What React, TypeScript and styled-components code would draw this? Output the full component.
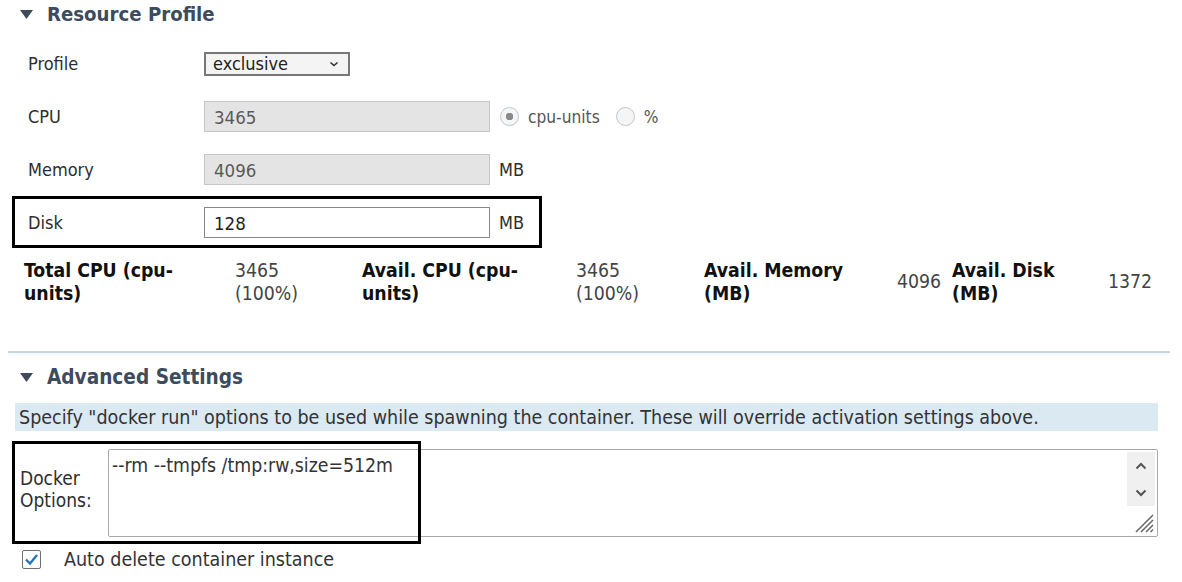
import styled, { createGlobalStyle } from 'styled-components'

const GlobalStyle = createGlobalStyle`
  html, body {
    margin: 0;
    padding: 0;
    background: #fff;
  }
  body {
    font-family: 'DejaVu Sans Condensed', 'DejaVu Sans', sans-serif;
    font-size: 18px;
    color: #2e2e2e;
  }
`

type Stat = { label: string; value: string }

const stats: Stat[] = [
  { label: 'Total CPU (cpu-units)', value: '3465 (100%)' },
  { label: 'Avail. CPU (cpu-units)', value: '3465 (100%)' },
  { label: 'Avail. Memory (MB)', value: '4096' },
  { label: 'Avail. Disk (MB)', value: '1372' },
]

function Caret() {
  return (
    <svg width="13" height="9" viewBox="0 0 13 9">
      <path d="M0 0 L13 0 L6.5 9 Z" fill="#3d4b5c" />
    </svg>
  )
}

function App() {
  return (
    <Page>
      <GlobalStyle />
      <SectionHeader>
        <Caret />
        <span>Resource Profile</span>
      </SectionHeader>

      <Form>
        <FormRow>
          <Label>Profile</Label>
          <Select>
            <span>exclusive</span>
            <svg width="12" height="8" viewBox="0 0 12 8">
              <path d="M2.5 2.5 L6 5.5 L9.5 2.5" fill="none" stroke="#333" strokeWidth="1.6" />
            </svg>
          </Select>
        </FormRow>
        <FormRow>
          <Label>CPU</Label>
          <Input disabled>3465</Input>
          <RadioGroup>
            <Radio checked />
            <RadioText>cpu-units</RadioText>
            <Radio />
            <RadioText>%</RadioText>
          </RadioGroup>
        </FormRow>
        <FormRow>
          <Label>Memory</Label>
          <Input disabled>4096</Input>
          <Unit>MB</Unit>
        </FormRow>
        <HighlightRow>
          <Label>Disk</Label>
          <Input>128</Input>
          <Unit>MB</Unit>
        </HighlightRow>
      </Form>

      <StatsGrid>
        {stats.map((s) => (
          <StatPair key={s.label}>
            <StatLabel>{s.label}</StatLabel>
            <StatValue>{s.value}</StatValue>
          </StatPair>
        ))}
      </StatsGrid>

      <Divider />

      <SectionHeader wide>
        <Caret />
        <span>Advanced Settings</span>
      </SectionHeader>

      <InfoBar>
        Specify "docker run" options to be used while spawning the container. These will override activation settings above.
      </InfoBar>

      <DockerRow>
        <DockerLabel>
          Docker
          <br />
          Options:
        </DockerLabel>
        <TextArea>
          <span>--rm --tmpfs /tmp:rw,size=512m</span>
          <ScrollColumn>
            <svg width="14" height="10" viewBox="0 0 14 10">
              <path d="M2.5 7.5 L7 3 L11.5 7.5" fill="none" stroke="#555" strokeWidth="2" />
            </svg>
            <svg width="14" height="10" viewBox="0 0 14 10">
              <path d="M2.5 2.5 L7 7 L11.5 2.5" fill="none" stroke="#555" strokeWidth="2" />
            </svg>
          </ScrollColumn>
          <Grip width="24" height="24" viewBox="0 0 24 24">
            <path d="M22 5 L5 22 M22 10 L10 22 M22 15 L15 22 M22 19.5 L19.5 22" stroke="#666" strokeWidth="1.5" />
          </Grip>
        </TextArea>
        <Annotation />
      </DockerRow>

      <CheckRow>
        <Checkbox>
          <svg width="15" height="13" viewBox="0 0 15 13">
            <path d="M2 6.5 L6 10.5 L13 2" fill="none" stroke="#1d6fc1" strokeWidth="2.2" />
          </svg>
        </Checkbox>
        <span>Auto delete container instance</span>
      </CheckRow>
    </Page>
  )
}

export default App

const Page = styled.div`
  width: 1182px;
  height: 582px;
  overflow: hidden;
`

const SectionHeader = styled.div<{ wide?: boolean }>`
  height: 28px;
  display: flex;
  align-items: center;
  padding-left: 20px;
  gap: 14px;
  font-size: ${({ wide }) => (wide ? '20.6px' : '20.2px')};
  font-weight: bold;
  color: #3d4b5c;
`

const Form = styled.div`
  padding-top: 9px;
`

const FormRow = styled.div`
  height: 53px;
  display: flex;
  align-items: center;
  padding-left: 28px;
`

const HighlightRow = styled(FormRow)`
  box-sizing: border-box;
  width: 530px;
  height: 52px;
  margin-left: 12px;
  padding-left: 13px;
  border: 3px solid #000;
`

const Label = styled.div`
  width: 176px;
`

const Select = styled.div`
  box-sizing: border-box;
  width: 146px;
  height: 24px;
  display: flex;
  align-items: center;
  justify-content: space-between;
  padding: 0 8px 0 7px;
  border: 2px solid #777;
  background: #f4f4f4;
  color: #222;
`

const Input = styled.div<{ disabled?: boolean }>`
  box-sizing: border-box;
  width: 286px;
  height: 31px;
  display: flex;
  align-items: center;
  padding: 2px 9px 0;
  font-size: 18.5px;
  border: 1px solid ${({ disabled }) => (disabled ? '#c6c6c6' : '#888')};
  background: ${({ disabled }) => (disabled ? '#e4e4e4' : '#fff')};
  color: ${({ disabled }) => (disabled ? '#5a5a5a' : '#222')};
`

const Unit = styled.span`
  margin-left: 9px;
`

const RadioGroup = styled.div`
  display: flex;
  align-items: center;
  margin-left: 10px;
  color: #555;
  font-size: 17.2px;
`

const RadioText = styled.span`
  margin-left: 9px;
  margin-right: 16px;
`

const Radio = styled.div<{ checked?: boolean }>`
  box-sizing: border-box;
  width: 19px;
  height: 19px;
  border-radius: 50%;
  border: 1px solid #c4c4c4;
  background: radial-gradient(circle, ${({ checked }) => (checked ? '#8a8a8a 0 3.5px,' : '')} #f3f5f7 4px);
`

const StatsGrid = styled.div`
  display: grid;
  grid-template-columns: 211px 127px 214px 128px 193px 55px 156px auto;
  align-items: center;
  height: 47px;
  margin-top: 10px;
  padding-left: 24px;
  line-height: 23px;
  font-size: 19.3px;
`

const StatPair = styled.div`
  display: contents;
`

const StatLabel = styled.div`
  font-weight: bold;
  color: #111;
  padding-right: 20px;
`

const StatValue = styled.div`
  max-width: 90px;
  color: #444;
`

const Divider = styled.div`
  height: 2px;
  margin: 46px 12px 10px 8px;
  background: #c8d6df;
  box-shadow: 0 2px 3px #eef2f4;
`

const InfoBar = styled.div`
  box-sizing: border-box;
  height: 28px;
  margin: 12px 24px 0 15px;
  padding-left: 4px;
  display: flex;
  align-items: center;
  background: #dbe9f3;
  color: #333;
  font-size: 19.5px;
`

const DockerRow = styled.div`
  position: relative;
  display: flex;
  align-items: center;
  margin-top: 18px;
  padding-left: 20px;
  margin-right: 24px;
`

const DockerLabel = styled.div`
  width: 88px;
  line-height: 22px;
  margin-bottom: 8px;
  font-size: 19px;
`

const TextArea = styled.div`
  position: relative;
  box-sizing: border-box;
  flex: 1;
  height: 88px;
  padding: 4px 3px;
  border: 1px solid #a9a9a9;
  border-radius: 2px;
  color: #333;
  font-size: 19.3px;
`

const ScrollColumn = styled.div`
  position: absolute;
  top: 2px;
  right: 2px;
  width: 28px;
  height: 54px;
  display: flex;
  flex-direction: column;
  align-items: center;
  justify-content: space-around;
  background: #f0f0f0;
`

const Grip = styled.svg`
  position: absolute;
  right: 2px;
  bottom: 2px;
`

const Annotation = styled.div`
  position: absolute;
  left: 12px;
  top: -8px;
  width: 409px;
  height: 103px;
  box-sizing: border-box;
  border: 3px solid #000;
`

const CheckRow = styled.div`
  display: flex;
  align-items: center;
  gap: 23px;
  margin-top: 11px;
  padding-left: 22px;
  color: #333;
  font-size: 19.5px;
`

const Checkbox = styled.div`
  box-sizing: border-box;
  width: 19px;
  height: 19px;
  display: flex;
  align-items: center;
  justify-content: center;
  border: 1.5px solid #6f6f6f;
  border-radius: 2px;
  background: #fff;
`
